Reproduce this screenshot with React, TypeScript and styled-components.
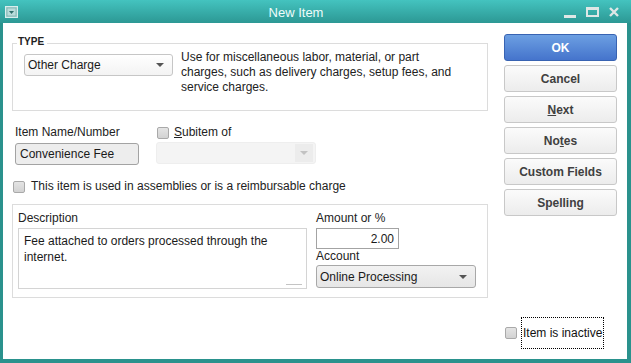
import React from 'react'
import styled, { createGlobalStyle } from 'styled-components'

const GlobalStyle = createGlobalStyle`
    html, body {
        margin: 0;
        padding: 0;
        background: #ffffff;
    }
    body {
        font-family: "Liberation Sans", Arial, sans-serif;
        font-size: 12px;
        color: #222222;
    }
`

const Window = styled.div`
    width: 631px;
    height: 363px;
    display: flex;
    flex-direction: column;
    background: #2a928d;
    box-sizing: border-box;
`

const TitleBar = styled.div`
    height: 23px;
    flex: none;
    display: flex;
    align-items: center;
    padding: 0 12px 0 5px;
    background: linear-gradient(#44c3bf, #2c9894);
`

const TitleText = styled.div`
    flex: 1;
    text-align: center;
    color: #effcfb;
    font-size: 13px;
    margin-left: 10px;
    padding-top: 1px;
`

const Controls = styled.div`
    display: flex;
    align-items: center;
    gap: 10px;
`

const Body = styled.div`
    flex: 1;
    display: flex;
    margin: 0 4px 4px 3px;
    background: #ffffff;
`

const LeftCol = styled.div`
    width: 476px;
    margin-left: 9px;
    padding-top: 20px;
    display: flex;
    flex-direction: column;
`

const Group = styled.div<{ $h: number }>`
    position: relative;
    height: ${p => p.$h}px;
    box-sizing: border-box;
    border: 1px solid #dcdcdc;
`

const Legend = styled.span`
    position: absolute;
    top: -8px;
    left: 4px;
    background: #ffffff;
    padding: 0 3px 0 1px;
    font-size: 10px;
    font-weight: bold;
    line-height: 12px;
    color: #222;
`

const TypeRow = styled.div`
    display: flex;
    gap: 8px;
    padding: 10px 11px;
`

const Select = styled.div<{ $w: number; $bg?: string; $border?: string }>`
    width: ${p => p.$w}px;
    height: 22px;
    box-sizing: border-box;
    flex: none;
    display: flex;
    align-items: center;
    justify-content: space-between;
    padding: 0 4px 0 3px;
    border: 1px solid ${p => p.$border || '#c6c6c6'};
    border-radius: 3px;
    background: ${p => p.$bg || 'linear-gradient(#ffffff, #f3f3f3)'};
    color: #1a1a1a;
`

const Arrow = styled.span<{ $color?: string; $mr?: number }>`
    width: 0;
    height: 0;
    margin-right: ${p => p.$mr ?? 4}px;
    border-left: 4px solid transparent;
    border-right: 4px solid transparent;
    border-top: 4px solid ${p => p.$color || '#555'};
`

const ArrowBox = styled.span`
    width: 18px;
    height: 18px;
    margin-right: -2px;
    display: flex;
    align-items: center;
    justify-content: center;
    background: #ececec;
`

const TypeDesc = styled.div`
    line-height: 15px;
    margin-top: -4px;
    color: #222;
`

const NameGrid = styled.div`
    display: grid;
    grid-template-columns: 141px 160px;
    margin: 14px 0 0 3px;
`

const Label = styled.div`
    line-height: 15px;
    color: #222;
`

const CheckRow = styled.label<{ $ml?: number }>`
    display: flex;
    align-items: center;
    gap: 5px;
    line-height: 15px;
    margin-left: ${p => p.$ml || 0}px;
`

const Check = styled.span`
    width: 12px;
    height: 12px;
    box-sizing: border-box;
    flex: none;
    border: 1px solid #a9a9a9;
    border-radius: 2px;
    background: linear-gradient(#e4e4e4, #d2d2d2);
`

const TextBox = styled.div<{ $w: number; $h: number; $bg?: string; $align?: string; $radius?: number }>`
    width: ${p => p.$w}px;
    height: ${p => p.$h}px;
    box-sizing: border-box;
    display: flex;
    align-items: center;
    justify-content: ${p => p.$align || 'flex-start'};
    padding: 0 4px;
    border: 1px solid #a3a3a3;
    border-radius: ${p => p.$radius ?? 0}px;
    background: ${p => p.$bg || '#ffffff'};
    color: #1a1a1a;
`

const NameInput = styled(TextBox)`
    margin-top: 3px;
`

const SubSelect = styled(Select)`
    margin-top: 2px;
`

const AssemblyRow = styled(CheckRow)`
    margin-top: 14px;
    gap: 6px;
`

const DescGroup = styled(Group)`
    margin-top: 10px;
    display: grid;
    grid-template-columns: 289px 160px;
    column-gap: 9px;
    align-content: start;
    padding: 6px 0 0 5px;
`

const DescCol = styled.div`
    display: flex;
    flex-direction: column;
`

const TextArea = styled.div`
    position: relative;
    margin-top: 2px;
    height: 61px;
    box-sizing: border-box;
    border: 1px solid #d4d4d4;
    padding: 4px 5px;
    line-height: 16px;
    color: #1a1a1a;
`

const Grip = styled.span`
    position: absolute;
    right: 4px;
    bottom: 3px;
    width: 16px;
    height: 1px;
    background: #c4c4c4;
`

const AmountInput = styled(TextBox)`
    margin: 2px 0 0;
`

const AccountSelect = styled(Select)`
    margin-top: 1px;
    height: 23px;
`

const RightCol = styled.div`
    width: 113px;
    margin-left: 16px;
    padding: 11px 0 10px;
    display: flex;
    flex-direction: column;
`

const Buttons = styled.div`
    display: flex;
    flex-direction: column;
    gap: 4px;
`

const Button = styled.button<{ $primary?: boolean }>`
    height: 27px;
    box-sizing: border-box;
    border-radius: 3px;
    font-family: "Liberation Sans", Arial, sans-serif;
    font-size: 12px;
    font-weight: bold;
    padding: 0;
    color: ${p => (p.$primary ? '#ffffff' : '#404040')};
    border: 1px solid ${p => (p.$primary ? '#3863b2' : '#c8c8c8')};
    background: ${p => (p.$primary ? 'linear-gradient(#6c9fe2, #4574cc)' : 'linear-gradient(#fbfbfb, #ececec)')};
`

const Inactive = styled.div`
    margin-top: auto;
    display: flex;
    align-items: center;
    gap: 4px;
    padding-left: 1px;
`

const FocusLabel = styled.span`
    height: 32px;
    box-sizing: border-box;
    display: flex;
    align-items: center;
    padding: 0 1px;
    border: 1px dotted #000;
    color: #111;
`

const SysIcon = () => (
    <svg width="13" height="12" viewBox="0 0 13 12">
        <rect x="0.5" y="0.5" width="12" height="11" fill="#a9d2d0" stroke="#d9eeee" />
        <rect x="2" y="2" width="9" height="8" fill="#b8dcdb" stroke="#6fa9a6" strokeWidth="0.6" />
        <path d="M4 5 L9 5 L6.5 8 Z" fill="#2f6f6c" />
    </svg>
)

const MinIcon = () => (
    <svg width="12" height="12" viewBox="0 0 12 12">
        <rect x="0" y="9" width="12" height="3" fill="#dfe7e6" />
    </svg>
)

const MaxIcon = () => (
    <svg width="13" height="12" viewBox="0 0 13 12">
        <rect x="1" y="2" width="11" height="8" fill="none" stroke="#dfe7e6" strokeWidth="2" />
        <rect x="0" y="1" width="13" height="3" fill="#dfe7e6" />
    </svg>
)

const CloseIcon = () => (
    <svg width="10" height="10" viewBox="0 0 10 10">
        <path d="M1 1 L9 9 M9 1 L1 9" stroke="#dfe7e6" strokeWidth="2.4" />
    </svg>
)

const App: React.FC = () => {
    return (
        <Window>
            <GlobalStyle />
            <TitleBar>
                <SysIcon />
                <TitleText>New Item</TitleText>
                <Controls>
                    <MinIcon />
                    <MaxIcon />
                    <CloseIcon />
                </Controls>
            </TitleBar>

            <Body>
                <LeftCol>
                    <Group $h={68}>
                        <Legend>TYPE</Legend>
                        <TypeRow>
                            <Select $w={149}>
                                <span>Other Charge</span>
                                <Arrow />
                            </Select>
                            <TypeDesc>
                                Use for miscellaneous labor, material, or part<br />
                                charges, such as delivery charges, setup fees, and<br />
                                service charges.
                            </TypeDesc>
                        </TypeRow>
                    </Group>

                    <NameGrid>
                        <Label>Item Name/Number</Label>
                        <CheckRow $ml={1}>
                            <Check />
                            <span><u>S</u>ubitem of</span>
                        </CheckRow>
                        <NameInput $w={124} $h={22} $bg="#ededed" $radius={3}>Convenience Fee</NameInput>
                        <SubSelect $w={160} $bg="#f4f4f4" $border="#eeeeee">
                            <span />
                            <ArrowBox><Arrow $color="#c2c2c2" $mr={0} /></ArrowBox>
                        </SubSelect>
                    </NameGrid>

                    <AssemblyRow $ml={1}>
                        <Check />
                        <span>This item is used in assemblies or is a reimbursable charge</span>
                    </AssemblyRow>

                    <DescGroup $h={94}>
                        <DescCol>
                            <Label>Description</Label>
                            <TextArea>
                                Fee attached to orders processed through the<br />
                                internet.
                                <Grip />
                            </TextArea>
                        </DescCol>
                        <DescCol>
                            <Label>Amount or %</Label>
                            <AmountInput $w={83} $h={21} $align="flex-end">2.00</AmountInput>
                            <Label>Account</Label>
                            <AccountSelect $w={160} $bg="linear-gradient(#f2f2f2, #e6e6e6)" $border="#a8a8a8">
                                <span>Online Processing</span>
                                <Arrow />
                            </AccountSelect>
                        </DescCol>
                    </DescGroup>
                </LeftCol>

                <RightCol>
                    <Buttons>
                        <Button $primary>OK</Button>
                        <Button>Cancel</Button>
                        <Button><u>N</u>ext</Button>
                        <Button>No<u>t</u>es</Button>
                        <Button>Custom Fields</Button>
                        <Button>Spellin<u>g</u></Button>
                    </Buttons>
                    <Inactive>
                        <Check />
                        <FocusLabel>Item is inactive</FocusLabel>
                    </Inactive>
                </RightCol>
            </Body>
        </Window>
    )
}

export default App
